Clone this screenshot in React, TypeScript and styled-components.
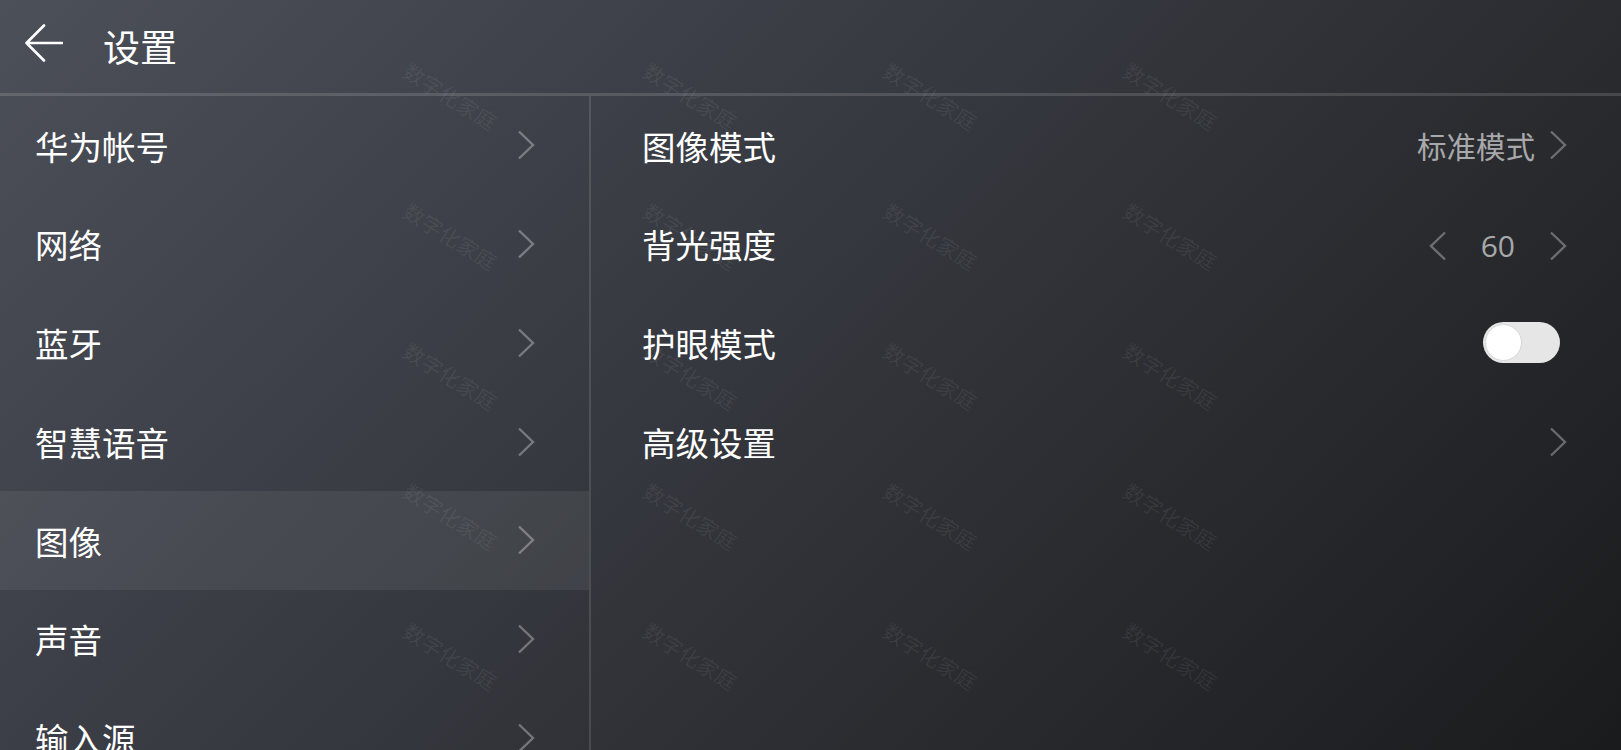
import React from "react";
import styled, { createGlobalStyle } from "styled-components";

const GlobalStyle = createGlobalStyle`
  html, body { margin: 0; padding: 0; background: #1b1c1e; }
  body { font-family: "Noto Sans CJK SC", "Noto Sans", sans-serif; }
  * { box-sizing: border-box; }
`;

const Screen = styled.div`
  position: relative;
  width: 1621px;
  height: 750px;
  overflow: hidden;
  display: flex;
  flex-direction: column;
  background: linear-gradient(135deg, #4c5059 0%, #3c3f47 31%, #2a2c30 68%, #1a1b1d 100%);
  color: #fff;
  font-family: "Noto Sans CJK SC", "Noto Sans", sans-serif;
`;

const Header = styled.header`
  height: 96px;
  flex: none;
  display: flex;
  align-items: center;
  gap: 40px;
  padding: 0 0 3px 25px;
  border-bottom: 3px solid rgba(255, 255, 255, 0.14);
`;

const BackButton = styled.button`
  border: 0;
  background: none;
  padding: 0;
  width: 38px;
  height: 38px;
  display: flex;
  align-items: center;
  justify-content: center;
  margin-top: -4px;
  color: #fff;
`;

const Title = styled.h1`
  margin: 0;
  font-size: 37px;
  font-weight: 400;
  line-height: 1;
  padding-top: 3px;
`;

const Body = styled.div`
  flex: 1;
  display: grid;
  grid-template-columns: 591px 1fr;
  min-height: 0;
`;

const LeftPanel = styled.nav`
  border-right: 2px solid rgba(255, 255, 255, 0.12);
  display: flex;
  flex-direction: column;
`;

const RightPanel = styled.section`
  display: flex;
  flex-direction: column;
`;

const NavItem = styled.div<{ $active?: boolean }>`
  height: 98.75px;
  flex: none;
  display: flex;
  align-items: center;
  justify-content: space-between;
  padding: 0 54px 0 35px;
  background: ${(p) => (p.$active ? "rgba(255,255,255,0.065)" : "transparent")};
`;

const SettingRow = styled.div`
  height: 98.75px;
  flex: none;
  display: flex;
  align-items: center;
  justify-content: space-between;
  padding: 0 54px 0 51px;
`;

const Label = styled.span`
  font-size: 33.5px;
  font-weight: 400;
  line-height: 1;
  color: #fff;
`;

const ValueGroup = styled.div`
  display: flex;
  align-items: center;
  gap: 14px;
`;

const ValueText = styled.span`
  font-size: 29.5px;
  line-height: 1;
  color: rgba(255, 255, 255, 0.6);
`;

const Stepper = styled.div`
  display: flex;
  align-items: center;
  gap: 34px;
  padding-top: 3px;
`;

const Number = styled.span`
  font-family: "Open Sans", "Noto Sans", sans-serif;
  font-size: 30px;
  line-height: 1;
  color: rgba(255, 255, 255, 0.6);
`;

const Chevron = styled.svg`
  width: 18px;
  height: 30px;
  flex: none;
  display: block;
`;

const Toggle = styled.div`
  width: 77px;
  height: 41px;
  border-radius: 21px;
  background: #e6e6e6;
  margin-right: 7px;
  display: flex;
  align-items: center;
  padding-left: 2px;
`;

const Knob = styled.div`
  width: 37px;
  height: 37px;
  border-radius: 50%;
  background: #fff;
  border: 1.5px solid #d6d6d6;
`;

const WatermarkLayer = styled.div`
  position: absolute;
  inset: 0;
  pointer-events: none;
  display: grid;
  grid-template-columns: repeat(4, 240px);
  grid-auto-rows: 140px;
  padding: 26px 0 0 330px;
  place-items: center;
`;

const Mark = styled.span`
  font-size: 21px;
  white-space: nowrap;
  color: rgba(255, 255, 255, 0.07);
  transform: rotate(32deg);
`;

const ChevronRight = () => (
  <Chevron viewBox="0 0 18 30">
    <path d="M2 1.5 L16 15 L2 28.5" fill="none" stroke="rgba(255,255,255,0.32)" strokeWidth="2.4" strokeLinejoin="miter" />
  </Chevron>
);

const ChevronLeft = () => (
  <Chevron viewBox="0 0 18 30">
    <path d="M16 1.5 L2 15 L16 28.5" fill="none" stroke="rgba(255,255,255,0.32)" strokeWidth="2.4" strokeLinejoin="miter" />
  </Chevron>
);

const BackArrow = () => (
  <svg width="38" height="38" viewBox="0 0 38 38">
    <path d="M1.5 19 H37 M19 1.5 L1.5 19 L19 36.5" fill="none" stroke="#fff" strokeWidth="2.6" strokeLinecap="round" strokeLinejoin="round" />
  </svg>
);

const navItems = ["华为帐号", "网络", "蓝牙", "智慧语音", "图像", "声音", "输入源", "通用"];

export default function App() {
  return (
    <>
      <GlobalStyle />
      <Screen>
        <Header>
          <BackButton aria-label="返回">
            <BackArrow />
          </BackButton>
          <Title>设置</Title>
        </Header>
        <Body>
          <LeftPanel>
            {navItems.map((item) => (
              <NavItem key={item} $active={item === "图像"}>
                <Label>{item}</Label>
                <ChevronRight />
              </NavItem>
            ))}
          </LeftPanel>
          <RightPanel>
            <SettingRow>
              <Label>图像模式</Label>
              <ValueGroup>
                <ValueText>标准模式</ValueText>
                <ChevronRight />
              </ValueGroup>
            </SettingRow>
            <SettingRow>
              <Label>背光强度</Label>
              <Stepper>
                <ChevronLeft />
                <Number>60</Number>
                <ChevronRight />
              </Stepper>
            </SettingRow>
            <SettingRow>
              <Label>护眼模式</Label>
              <Toggle>
                <Knob />
              </Toggle>
            </SettingRow>
            <SettingRow>
              <Label>高级设置</Label>
              <ChevronRight />
            </SettingRow>
          </RightPanel>
        </Body>
        <WatermarkLayer>
          {Array.from({ length: 20 }).map((_, i) => (
            <Mark key={i}>数字化家庭</Mark>
          ))}
        </WatermarkLayer>
      </Screen>
    </>
  );
}
